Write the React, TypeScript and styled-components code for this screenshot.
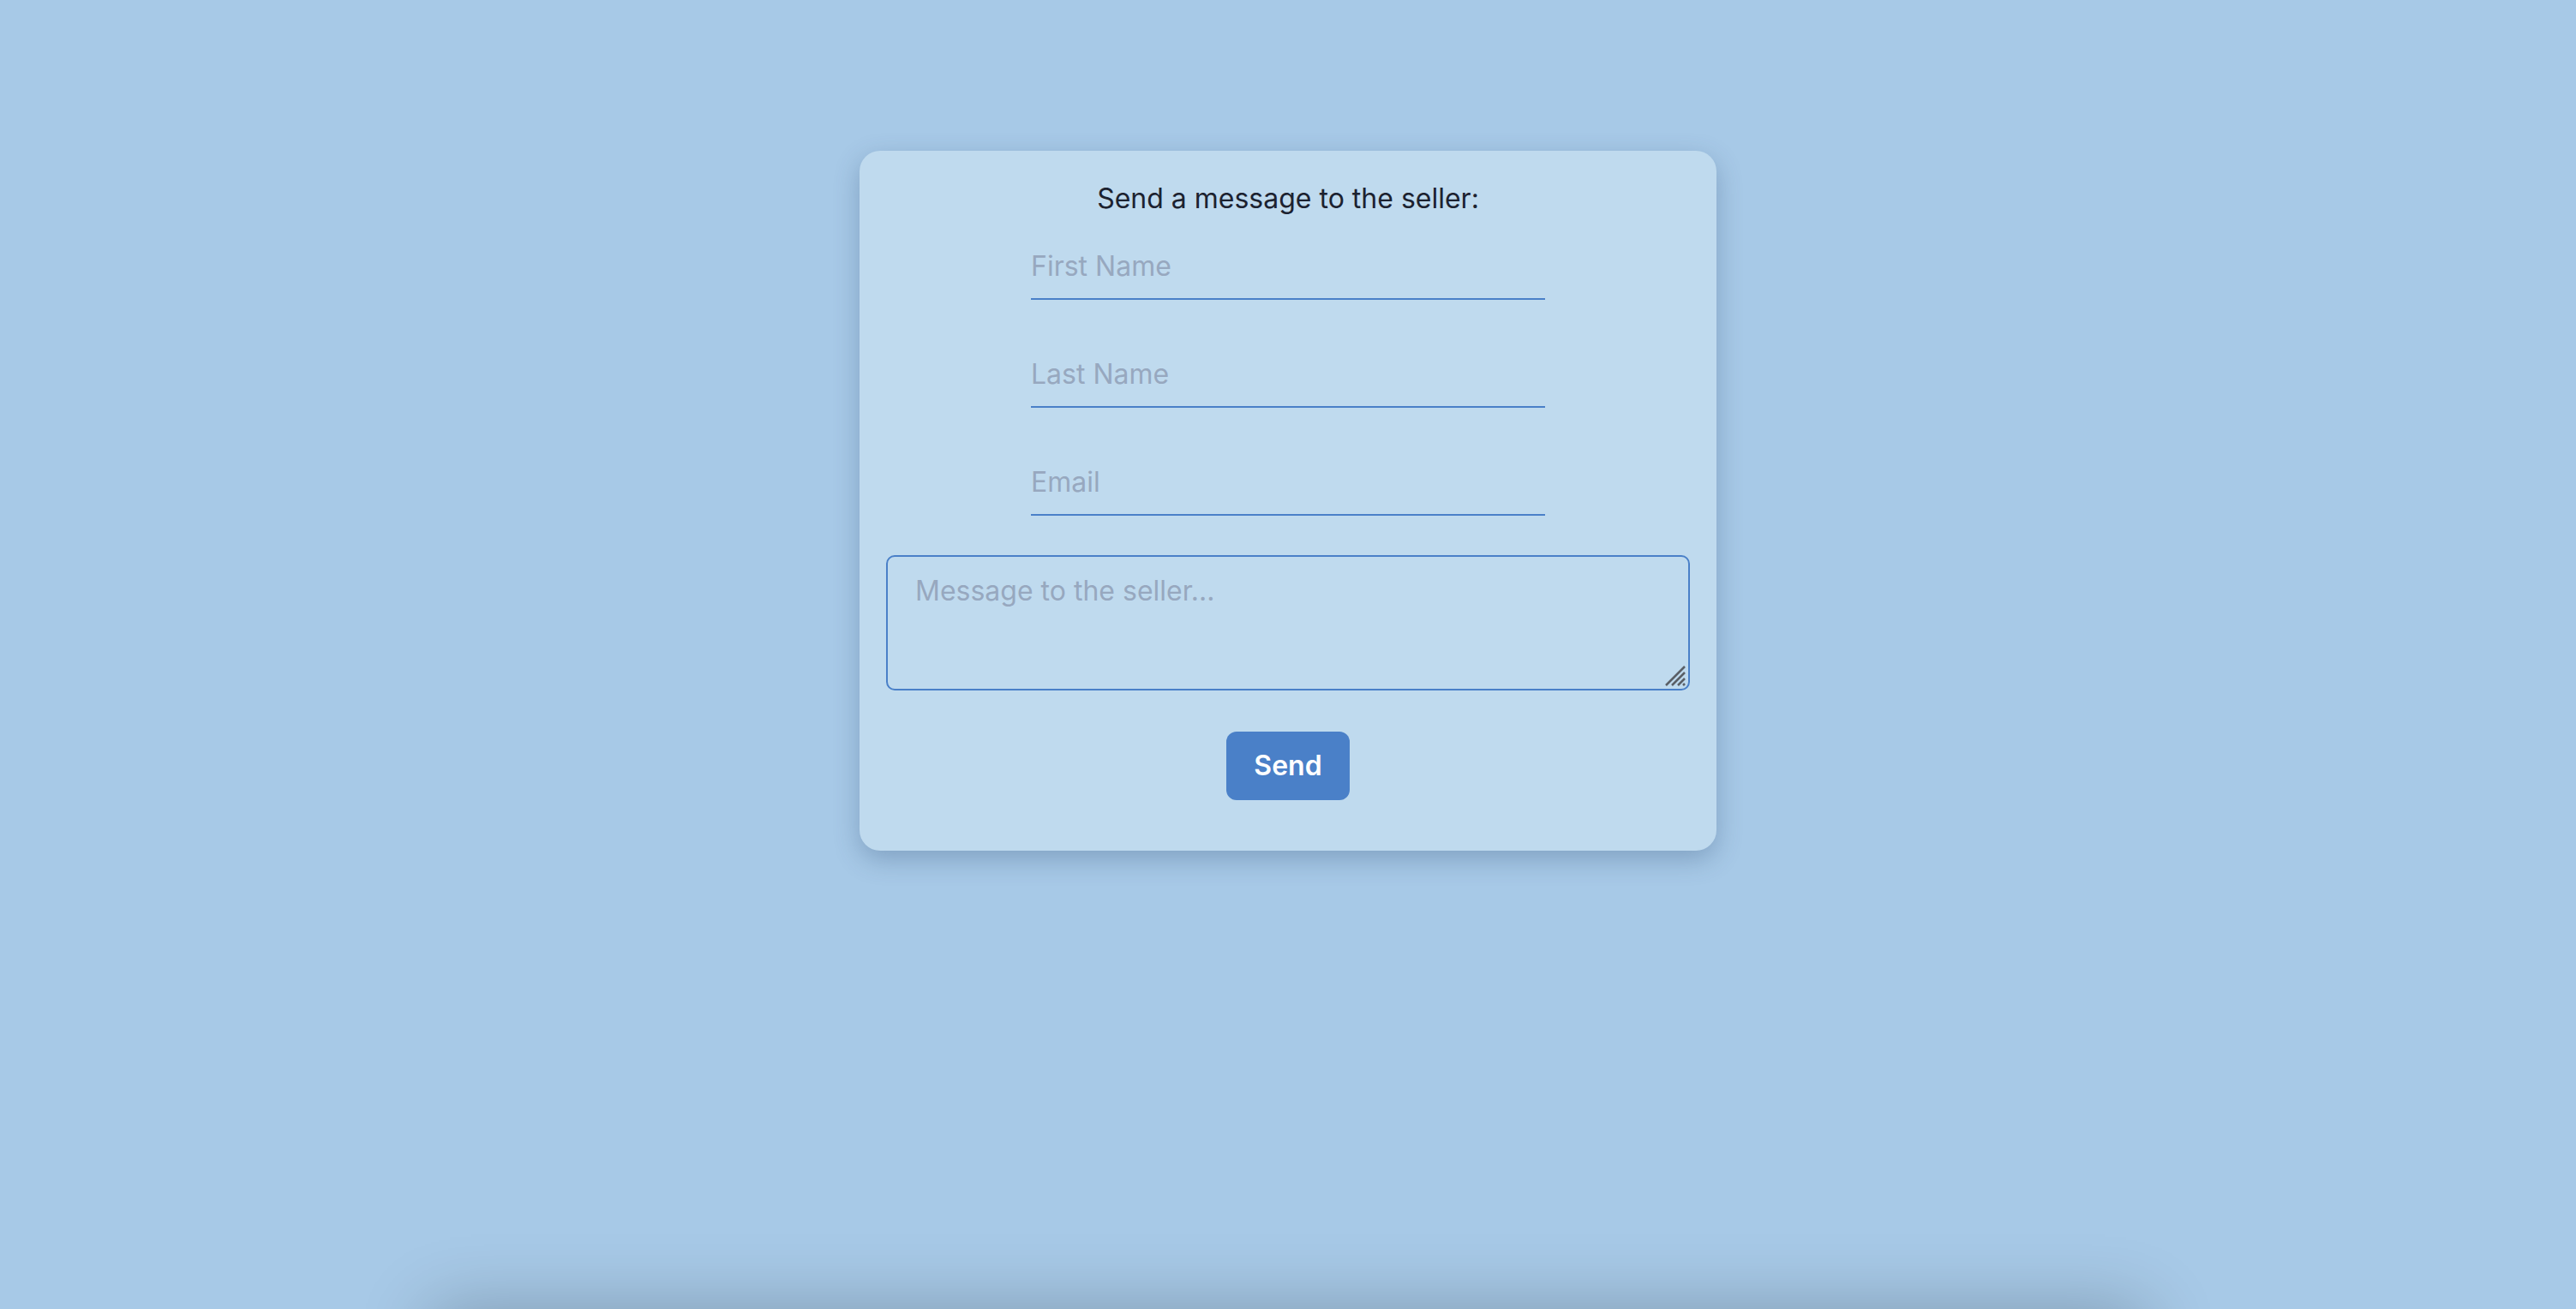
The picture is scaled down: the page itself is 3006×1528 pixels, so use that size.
import React from "react";
import styled, { createGlobalStyle } from "styled-components";

const GlobalStyle = createGlobalStyle`
  html, body {
    margin: 0;
    padding: 0;
    background: #a7c9e7;
    font-family: Inter, "Noto Sans", "Liberation Sans", sans-serif;
  }
`;

export default function App() {
  return (
    <>
      <GlobalStyle />
      <Hero>
        <Card>
          <Title>Send a message to the seller:</Title>
          <LineInput placeholder="First Name" />
          <LineInput placeholder="Last Name" />
          <LineInput placeholder="Email" type="email" />
          <MessageBox>
            <MessageInput placeholder="Message to the seller..." />
            <Grip width="26" height="26" viewBox="0 0 26 26">
              <line x1="2" y1="24" x2="24" y2="2" />
              <line x1="9" y1="24" x2="24" y2="9" />
              <line x1="16" y1="24" x2="24" y2="16" />
              <line x1="22" y1="24" x2="24" y2="22" />
            </Grip>
          </MessageBox>
          <SendButton type="button">Send</SendButton>
        </Card>
      </Hero>
      <Listing />
    </>
  );
}

const Hero = styled.section`
  min-height: 1528px;
  box-sizing: border-box;
  padding-top: 176px;
  display: flex;
  flex-direction: column;
  align-items: center;
`;

const Card = styled.form`
  width: 1000px;
  box-sizing: border-box;
  padding: 36px 31px 59px;
  background: #bfdaee;
  border-radius: 24px;
  box-shadow: 0 10px 30px rgba(40, 70, 110, 0.3);

  display: flex;
  flex-direction: column;
  align-items: center;
`;

const Title = styled.h2`
  margin: 0 0 28px;
  font-size: 32px;
  line-height: 40px;
  font-weight: 400;
  color: #1c2230;
`;

const LineInput = styled.input`
  width: 600px;
  height: 70px;
  box-sizing: border-box;
  padding: 10px 0 18px;
  margin-bottom: 56px;
  border: none;
  border-bottom: 2px solid #4a80c8;
  background: transparent;
  font-family: inherit;
  font-size: 32px;
  line-height: 40px;
  color: #1c2230;
  outline: none;

  &:last-of-type {
    margin-bottom: 46px;
  }

  &::placeholder {
    color: #97a8bf;
  }
`;

const MessageBox = styled.div`
  position: relative;
  width: 100%;
  height: 158px;
  margin-bottom: 48px;
`;

const MessageInput = styled.textarea`
  width: 100%;
  height: 100%;
  box-sizing: border-box;
  padding: 20px 32px;
  border: 2px solid #4a80c8;
  border-radius: 10px;
  background: transparent;
  font-family: inherit;
  font-size: 32px;
  line-height: 40px;
  color: #1c2230;
  resize: none;
  outline: none;
  display: block;

  &::placeholder {
    color: #97a8bf;
  }
`;

const Grip = styled.svg`
  position: absolute;
  right: 4px;
  bottom: 4px;
  pointer-events: none;

  line {
    stroke: #5a5f66;
    stroke-width: 2.5;
  }
`;

const SendButton = styled.button`
  padding: 20px 32px;
  border: none;
  border-radius: 12px;
  background: #4a80c8;
  color: #ffffff;
  font-family: inherit;
  font-size: 32px;
  line-height: 40px;
  font-weight: 600;
  cursor: pointer;
`;

const Listing = styled.section`
  width: 2000px;
  height: 400px;
  margin: 0 auto;
  background: #a7c9e7;
  box-shadow: 0 0 80px rgba(0, 0, 0, 0.24);
`;
